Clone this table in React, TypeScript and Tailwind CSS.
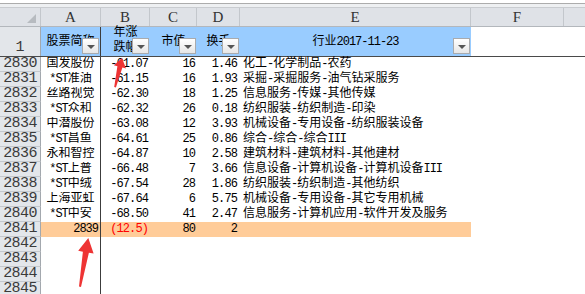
import React from "react";

const FONT = "font-['Liberation_Mono','Noto_Sans_CJK_SC',monospace]";

const rows: [number, string, string, string, string, string][] = [
  [2830, "国发股份", "-61.07", "16", "1.46", "化工-化学制品-农药"],
  [2831, "*ST准油", "-61.15", "16", "1.93", "采掘-采掘服务-油气钻采服务"],
  [2832, "丝路视觉", "-62.30", "18", "1.25", "信息服务-传媒-其他传媒"],
  [2833, "*ST众和", "-62.32", "26", "0.18", "纺织服装-纺织制造-印染"],
  [2834, "中潜股份", "-63.08", "12", "3.93", "机械设备-专用设备-纺织服装设备"],
  [2835, "*ST昌鱼", "-64.61", "25", "0.86", "综合-综合-综合III"],
  [2836, "永和智控", "-64.87", "10", "2.58", "建筑材料-建筑材料-其他建材"],
  [2837, "*ST上普", "-66.48", "7", "3.66", "信息设备-计算机设备-计算机设备III"],
  [2838, "*ST中绒", "-67.54", "28", "1.86", "纺织服装-纺织制造-其他纺织"],
  [2839, "上海亚虹", "-67.64", "6", "5.75", "机械设备-专用设备-其它专用机械"],
  [2840, "*ST中安", "-68.50", "41", "2.47", "信息服务-计算机应用-软件开发及服务"],
];

function Mixed({ text }: { text: string }) {
  const parts = text.split(/([\x00-\x7F]+)/).filter((p) => p.length > 0);
  return (
    <>
      {parts.map((p, i) =>
        /^[\x00-\x7F]+$/.test(p) ? (
          <span key={i} className="tracking-[-1px]">
            {p}
          </span>
        ) : (
          <span key={i}>{p}</span>
        )
      )}
    </>
  );
}

function RowHead({ n }: { n: number | string }) {
  return (
    <div className="w-[41px] flex-none h-full bg-[#e3e6ea] border-r border-b border-r-[#a3a8ae] border-b-[#c4c8cd] flex items-center justify-center text-[15px] leading-[14px] tracking-[-0.6px] text-[#3a3a3a] font-['Liberation_Mono',monospace]">
      {n}
    </div>
  );
}

function FilterBtn() {
  return (
    <div className="absolute right-[1px] bottom-[2px] w-[17px] h-[16px] border border-[#a9abae] bg-gradient-to-b from-[#ffffff] to-[#e6e6e6] flex items-center justify-center">
      <div className="w-0 h-0 border-l-[4px] border-r-[4px] border-t-[4px] border-l-transparent border-r-transparent border-t-[#555] mt-[2px]" />
    </div>
  );
}

function DataRow({
  n,
  a,
  b,
  c,
  d,
  e,
  orange,
}: {
  n: number;
  a?: string;
  b?: string;
  c?: string;
  d?: string;
  e?: string;
  orange?: boolean;
}) {
  const bg = orange ? "bg-[#ffcc99]" : "";
  return (
    <div className={`flex h-[15px] text-[12px] leading-[15px] text-black ${FONT}`}>
      <RowHead n={n} />
      <div
        className={`w-[60px] flex-none border-r border-r-[#3c3c3c] whitespace-nowrap overflow-hidden ${bg} ${
          orange ? "text-right pr-[2px]" : "text-center"
        }`}
      >
        {a ? <Mixed text={a} /> : null}
      </div>
      <div className={`w-[49px] flex-none text-right pr-[2px] tracking-[-0.9px] ${bg} ${orange ? "text-[#ff0000]" : ""}`}>
        {b}
      </div>
      <div className={`w-[47px] flex-none text-right pr-[2px] tracking-[-0.9px] ${bg}`}>{c}</div>
      <div className={`w-[43px] flex-none text-right pr-[3px] tracking-[-0.9px] ${bg}`}>{d}</div>
      <div className={`w-[231px] flex-none pl-[3px] whitespace-nowrap overflow-visible ${bg}`}>
        {e ? <Mixed text={e} /> : null}
      </div>
      <div className="w-[93px] flex-none" />
      <div className="flex-1" />
    </div>
  );
}

export default function App() {
  const colHead =
    "h-full flex-none flex items-center justify-center border-r border-r-[#c3c7cc] text-[15px] text-[#333] font-['Liberation_Serif',serif]";
  return (
    <div className="relative w-[585px] h-[294px] overflow-hidden bg-white">
      {/* top strip */}
      <div className="h-[3px] bg-white" />
      <div className="h-[1px] bg-[#acacac]" />
      <div className="h-[3px] bg-[#eef0f2]" />
      {/* column letters */}
      <div className="flex h-[20px] bg-[#dfe2e7] border-t border-b border-t-[#c9ccd0] border-b-[#b3b7bc]">
        <div className="relative w-[41px] flex-none h-full border-r border-r-[#c3c7cc]">
          <div className="absolute right-[4px] bottom-[3px] w-0 h-0 border-l-[9px] border-b-[9px] border-l-transparent border-b-[#b7bbc0]" />
        </div>
        <div className={`${colHead} w-[60px] border-r-[#4a4a4a]`}>A</div>
        <div className={`${colHead} w-[49px]`}>B</div>
        <div className={`${colHead} w-[47px]`}>C</div>
        <div className={`${colHead} w-[43px]`}>D</div>
        <div className={`${colHead} w-[231px]`}>E</div>
        <div className={`${colHead} w-[93px]`}>F</div>
        <div className="flex-1" />
      </div>
      {/* row 1 */}
      <div className={`flex h-[30px] border-b border-b-[#4a4a4a] text-[12px] text-black ${FONT}`}>
        <div className="w-[41px] flex-none h-full bg-[#e3e6ea] border-r border-r-[#a3a8ae] flex items-end justify-center pb-[1px] text-[15px] leading-[14px] text-[#3a3a3a] font-['Liberation_Mono',monospace]">
          1
        </div>
        <div className="relative w-[60px] flex-none h-full bg-[#99ccff] border-r border-r-[#3c3c3c] flex items-center justify-center overflow-hidden whitespace-nowrap pt-[1px]">
          股票简称
          <FilterBtn />
        </div>
        <div className="relative w-[49px] flex-none h-full bg-[#99ccff] flex items-center justify-center">
          <div className="text-center leading-[15px] w-[26px] pb-[1px]">
            年涨
            <br />
            跌幅
          </div>
          <FilterBtn />
        </div>
        <div className="relative w-[47px] flex-none h-full bg-[#99ccff] flex items-center justify-center pt-[1px]">
          市值
          <FilterBtn />
        </div>
        <div className="relative w-[43px] flex-none h-full bg-[#99ccff] flex items-center justify-center pt-[1px]">
          换手
          <FilterBtn />
        </div>
        <div className="relative w-[231px] flex-none h-full bg-[#99ccff] flex items-center justify-center pt-[1px]">
          <span>
            <Mixed text="行业2017-11-23" />
          </span>
          <FilterBtn />
        </div>
        <div className="w-[93px] flex-none" />
        <div className="flex-1" />
      </div>
      {rows.map((r) => (
        <DataRow key={r[0]} n={r[0]} a={r[1]} b={r[2]} c={r[3]} d={r[4]} e={r[5]} />
      ))}
      <DataRow n={2841} a="2839" b="(12.5)" c="80" d="2" orange />
      <DataRow n={2842} />
      <DataRow n={2843} />
      <DataRow n={2844} />
      <DataRow n={2845} />

      {/* red arrows */}
      <svg className="absolute inset-0 pointer-events-none" width="585" height="294" viewBox="0 0 585 294">
        <polygon
          points="122,58 126,68.4 122.4,67.5 115.9,87.4 114.2,86.9 117.4,66.3 113.9,65.3"
          fill="#ee3434"
        />
        <polygon
          points="88.3,238 93.6,253.6 88.9,252.7 81,287 79,286.6 82.9,251.7 78.2,250.8"
          fill="#ee3434"
        />
      </svg>
    </div>
  );
}
